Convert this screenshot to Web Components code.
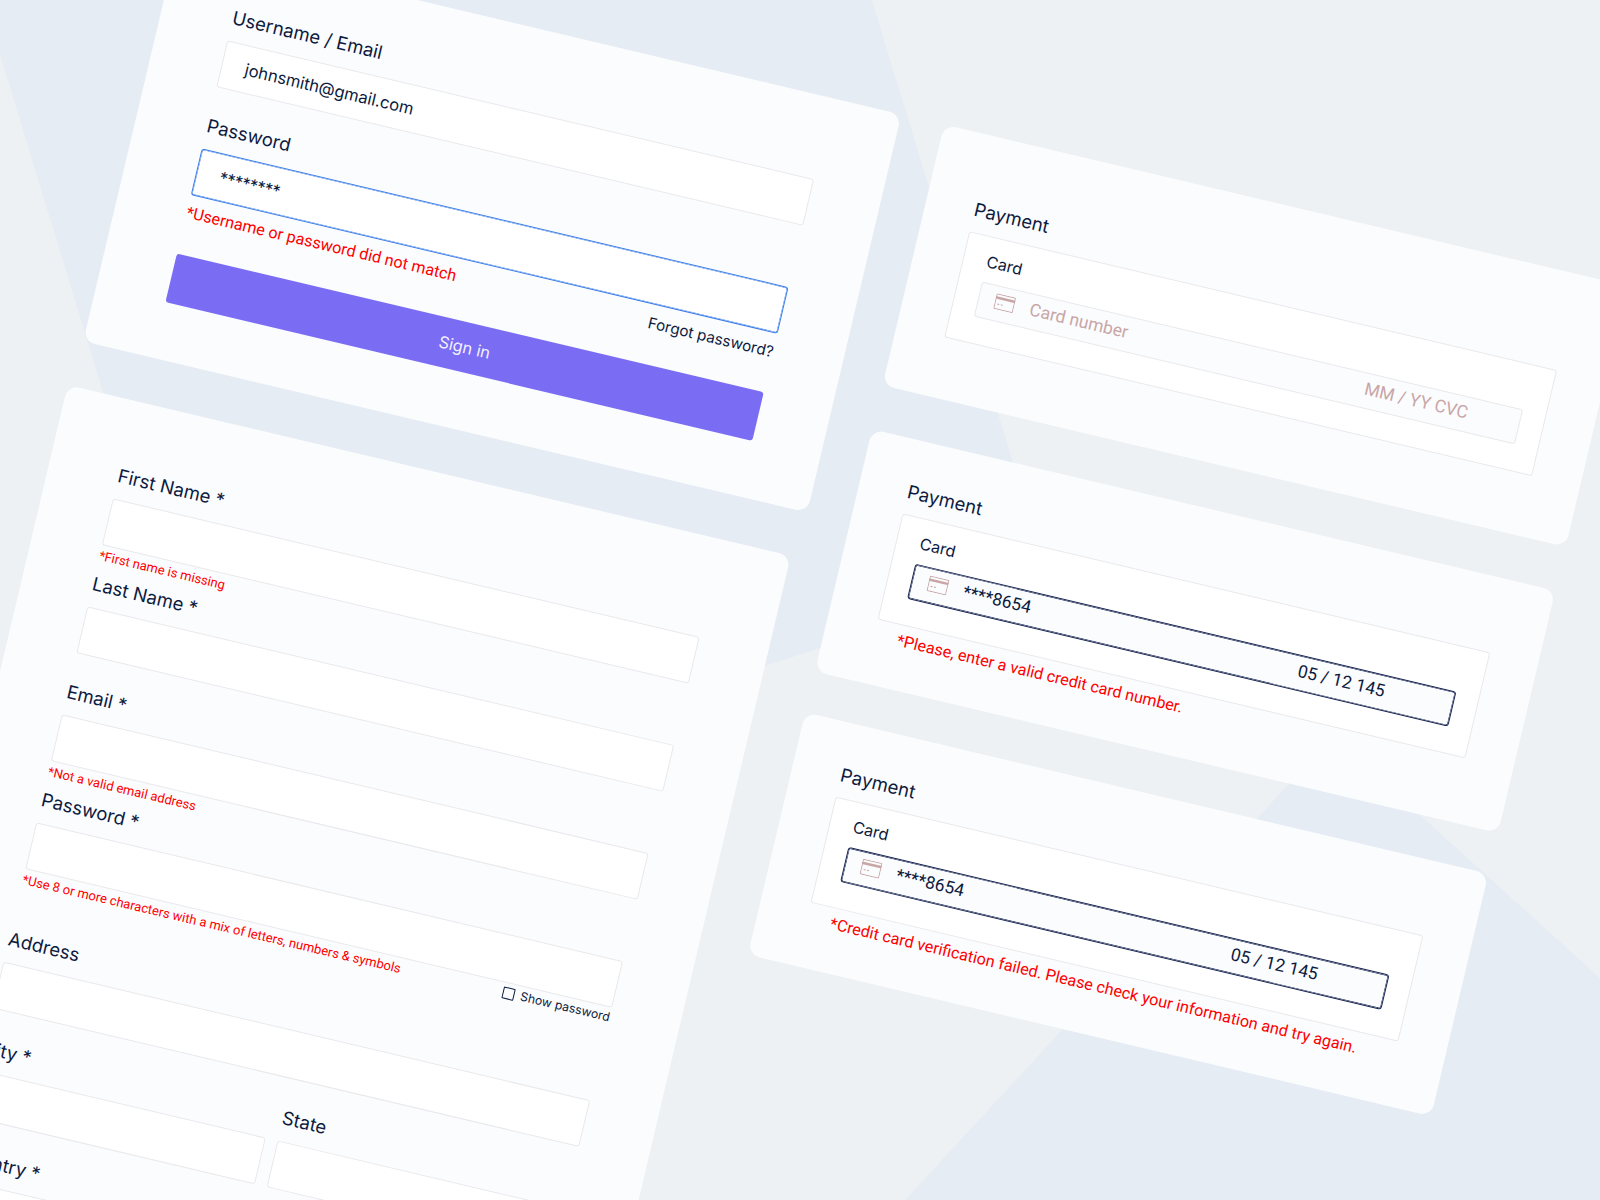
<!DOCTYPE html>
<html lang="en"><head><meta charset="utf-8"><title>Forms</title>
<style>
html,body{margin:0;padding:0;width:1600px;height:1200px;overflow:hidden;background:#eef1f4}
body{font-family:Inter,"Noto Sans",sans-serif;color:#0d1b3e;position:relative}
</style></head><body>
<fx-backdrop></fx-backdrop>
<fx-stage>
  <fx-column slot="left">
    <fx-card pad-top="47" pad-bottom="57" style="--shift:5px;--w:744px;--pl:71px">
      <fx-field label="Username / Email"><fx-input value="johnsmith@gmail.com"></fx-input></fx-field>
      <fx-field label="Password"><fx-input value="********" state="focus"></fx-input>
        <fx-msg slot="msg" size="16.2">*Username or password did not match</fx-msg>
        <fx-link slot="aside">Forgot password?</fx-link></fx-field>
      <fx-button>Sign in</fx-button>
    </fx-card>
    <fx-card pad-top="64" pad-bottom="60">
      <fx-field label="First Name *"><fx-input></fx-input><fx-msg slot="msg" size="13">*First name is missing</fx-msg></fx-field>
      <fx-field label="Last Name *"><fx-input></fx-input></fx-field>
      <fx-field label="Email *"><fx-input></fx-input><fx-msg slot="msg" size="13">*Not a valid email address</fx-msg></fx-field>
      <fx-field label="Password *" tall><fx-input></fx-input><fx-msg slot="msg" size="13">*Use 8 or more characters with a mix of letters, numbers &amp; symbols</fx-msg>
        <fx-check slot="aside">Show password</fx-check></fx-field>
      <fx-field label="Address"><fx-input></fx-input></fx-field>
      <fx-pair>
        <fx-field label="City *"><fx-input></fx-input></fx-field>
        <fx-field label="State"><fx-input></fx-input></fx-field>
      </fx-pair>
      <fx-field label="Country *"><fx-input></fx-input></fx-field>
    </fx-card>
  </fx-column>
  <fx-column slot="right">
    <fx-payment pad-top="63" pad-bottom="61"></fx-payment>
    <fx-payment pad-top="40" pad-bottom="39" filled error="*Please, enter a valid credit card number."></fx-payment>
    <fx-payment pad-top="40" pad-bottom="39" filled style="margin-top:-3px" error="*Credit card verification failed. Please check your information and try again."></fx-payment>
  </fx-column>
</fx-stage>
<script>
function def(name, css, html, extra){
  customElements.define(name, class extends HTMLElement{
    constructor(){super();const r=this.attachShadow({mode:'open'});
      r.innerHTML='<style>'+css+'</style>'+(typeof html==='function'?html(this):html);}
    connectedCallback(){ if(extra) extra.call(this,this.shadowRoot); }
  });
}
def('fx-backdrop',
 ':host{position:absolute;inset:0;display:block}svg{display:block;width:100%;height:100%}',
 '<svg viewBox="0 0 1600 1200"><rect width="1600" height="1200" fill="#eef1f4"/><polygon fill="#e6ecf4" points="0,0 872,0 1047,574 239,838 0,55"/><polygon fill="#e6ecf4" points="1333,736 1600,978 1600,1200 905,1200"/></svg>');
def('fx-stage',
 ':host{position:absolute;left:0;top:0;display:flex;gap:44px;transform-origin:0 0;transform:rotate(13.3deg) translate(154.5px,-96px);align-items:flex-start}'+
 '.r{display:block}',
 '<slot name="left"></slot><div class="r"><slot name="right"></slot></div>');
def('fx-column',':host{display:flex;flex-direction:column;gap:46px}:host([slot=right]){gap:45px}','<slot></slot>');
def('fx-card',
 ':host{display:flex;flex-direction:column;box-sizing:border-box;width:var(--w,743px);padding:0 70px 0 var(--pl,70px);background:#fbfcfe;border-radius:12px;margin-left:var(--shift,0)}',
 '<slot></slot>',
 function(r){this.style.paddingTop=this.getAttribute('pad-top')+'px';this.style.paddingBottom=this.getAttribute('pad-bottom')+'px';});
def('fx-field',
 ':host{display:block;flex:1;min-width:0}'+
 '.l{display:block;font:400 18.5px/25px Inter,sans-serif;color:#0d1b3e;margin-bottom:11px}'+
 '.m{display:flex;justify-content:space-between;align-items:flex-start;min-height:27px}'+
 ':host([tall]) .m{min-height:59px}',
 function(h){return '<span class="l">'+h.getAttribute('label')+'</span><slot></slot><div class="m"><slot name="msg"><span></span></slot><slot name="aside"></slot></div>';});
def('fx-pair',':host{display:flex;gap:12px}','<slot></slot>');
def('fx-input',
 ':host{display:flex;align-items:center;box-sizing:border-box;height:48px;padding:0 23px;background:#fff;border:1px solid #e9e9ec;border-radius:3px;font:400 16.6px/22px Inter,sans-serif;color:#0d1b3e}'+
 ':host([state=focus]){border:1px solid #3b7de8;box-shadow:inset 0 0 0 .5px #3b7de8;letter-spacing:-.6px}',
 function(h){return h.getAttribute('value')||'';});
def('fx-msg',':host{display:block;color:#f00;font-family:Roboto,sans-serif}','<slot></slot>',
 function(){const s=parseFloat(this.getAttribute('size'));this.style.fontSize=s+'px';this.style.lineHeight=(s+4)+'px';this.style.marginTop=(s>14?8:2)+'px';});
def('fx-link',':host{display:block;margin-top:9px;font:400 15.2px/20px Inter,sans-serif;color:#0d1b3e;white-space:nowrap}','<slot></slot>');
def('fx-check',
 ':host{display:flex;align-items:center;gap:6px;margin-top:1px;font:400 12.2px/18px Inter,sans-serif;color:#0d1b3e;white-space:nowrap}'+
 'i{display:block;width:10px;height:10px;border:1px solid #0d1b3e;border-radius:1px}','<i></i><slot></slot>');
def('fx-button',
 ':host{display:flex;align-items:center;justify-content:center;height:50px;margin-top:31px;background:#7a6df4;border-radius:3px;color:rgba(255,255,255,.92);font:400 16.4px/22px Inter,sans-serif}','<slot></slot>');
const cardIcon='<svg width="20" height="16" viewBox="0 0 20 16" fill="none" stroke="#c9a6a6" stroke-width="1"><rect x=".5" y=".5" width="19" height="15" rx="1"/><rect x="0" y="3" width="20" height="2.5" fill="#c9a6a6" stroke="none"/><path d="M3 10.5h2M6.5 10.5h2"/></svg>';
def('fx-payment',
 ':host{display:block;box-sizing:border-box;width:702px;padding:0 49px;background:#fbfcfe;border-radius:12px}'+
 '.l{font:400 18.5px/25px Inter,sans-serif;color:#0d1b3e;margin-bottom:10px}'+
 '.box{box-sizing:border-box;height:109px;padding:14px 23px 0;background:#fff;border:1px solid #e9e9ec;border-radius:3px}'+
 '.c{font:400 16px/20px Inter,sans-serif;color:#0d1b3e;margin-bottom:11px}'+
 '.in{display:flex;align-items:center;box-sizing:border-box;height:36px;padding:0 0 5px 16px;background:#fbfcfe;border:1px solid #e9e9ec;border-radius:3px;font:400 17.5px/22px Roboto,sans-serif;color:#c9a6a6}'+
 '.in svg{margin-right:16px;flex:none}.in .x{margin-left:auto;width:158px;flex:none;white-space:nowrap}'+
 ':host([filled]) .in{border:1px solid #14214d;box-shadow:inset 0 0 0 .6px #14214d;color:#0d1b3e}'+
 '.e{font:400 16.2px/20px Roboto,sans-serif;color:#f00;margin:6px 0 0 24px;white-space:nowrap}',
 function(h){const f=h.hasAttribute('filled'),e=h.getAttribute('error');
  return '<div class="l">Payment</div><div class="box"><div class="c">Card</div><div class="in">'+cardIcon+'<span>'+(f?'****8654':'Card number')+'</span><span class="x">'+(f?'05 / 12 145':'MM / YY CVC')+'</span></div></div>'+(e?'<div class="e">'+e+'</div>':'');},
 function(r){this.style.paddingTop=this.getAttribute('pad-top')+'px';this.style.paddingBottom=(+this.getAttribute('pad-bottom'))+'px';});
</script>
</body></html>
